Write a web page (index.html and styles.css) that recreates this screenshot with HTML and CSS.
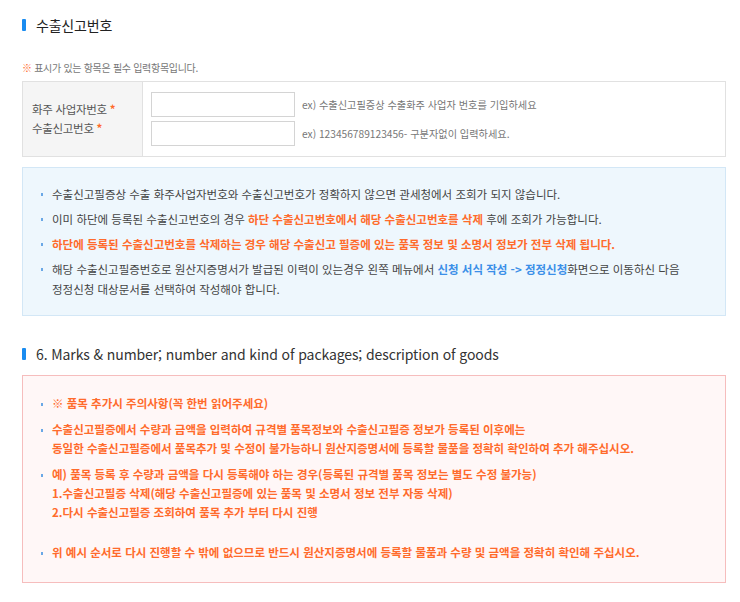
FILE: index.html
```html
<!DOCTYPE html>
<html lang="ko">
<head>
<meta charset="utf-8">
<title>수출신고번호</title>
<link rel="stylesheet" href="styles.css">
</head>
<body>
<div class="page">
  <h2 class="sec-title"><span class="bar"></span>수출신고번호</h2>
  <p class="req-note"><span class="mark">※</span> 표시가 있는 항목은 필수 입력항목입니다.</p>

  <div class="form-table">
    <div class="form-label">
      <div>화주 사업자번호 <span class="star">*</span></div>
      <div>수출신고번호 <span class="star">*</span></div>
    </div>
    <div class="form-fields">
      <div class="field-row">
        <input type="text" class="txt">
        <span class="hint">ex) 수출신고필증상 수출화주 사업자 번호를 기입하세요</span>
      </div>
      <div class="field-row">
        <input type="text" class="txt">
        <span class="hint">ex) 123456789123456- 구분자없이 입력하세요.</span>
      </div>
    </div>
  </div>

  <ul class="info-box">
    <li>수출신고필증상 수출 화주사업자번호와 수출신고번호가 정확하지 않으면 관세청에서 조회가 되지 않습니다.</li>
    <li>이미 하단에 등록된 수출신고번호의 경우 <strong class="warn">하단 수출신고번호에서 해당 수출신고번호를 삭제</strong> 후에 조회가 가능합니다.</li>
    <li class="warn">하단에 등록된 수출신고번호를 삭제하는 경우 해당 수출신고 필증에 있는 품목 정보 및 소명서 정보가 전부 삭제 됩니다.</li>
    <li>해당 수출신고필증번호로 원산지증명서가 발급된 이력이 있는경우 왼쪽 메뉴에서 <strong class="link">신청 서식 작성 -&gt; 정정신청</strong>화면으로 이동하신 다음<br>정정신청 대상문서를 선택하여 작성해야 합니다.</li>
  </ul>

  <h2 class="sec-title sec-title2"><span class="bar"></span>6. Marks &amp; number; number and kind of packages; description of goods</h2>

  <ul class="caution-box">
    <li>※ 품목 추가시 주의사항(꼭 한번 읽어주세요)</li>
    <li>수출신고필증에서 수량과 금액을 입력하여 규격별 품목정보와 수출신고필증 정보가 등록된 이후에는<br>동일한 수출신고필증에서 품목추가 및 수정이 불가능하니 원산지증명서에 등록할 물품을 정확히 확인하여 추가 해주십시오.</li>
    <li>예) 품목 등록 후 수량과 금액을 다시 등록해야 하는 경우(등록된 규격별 품목 정보는 별도 수정 불가능)<br>1.수출신고필증 삭제(해당 수출신고필증에 있는 품목 및 소명서 정보 전부 자동 삭제)<br>2.다시 수출신고필증 조회하여 품목 추가 부터 다시 진행</li>
    <li class="spaced">위 예시 순서로 다시 진행할 수 밖에 없으므로 반드시 원산지증명서에 등록할 물품과 수량 및 금액을 정확히 확인해 주십시오.</li>
  </ul>
</div>
</body>
</html>
```
FILE: styles.css
```css
* { box-sizing: border-box; }
html, body { margin: 0; padding: 0; background: #fff; }
body {
  font-family: "Noto Sans CJK KR", "Noto Sans", sans-serif;
  color: #444;
}
.page {
  padding: 15px 14px 0 22px;
}
.sec-title {
  margin: 0;
  display: flex;
  align-items: center;
  font-size: 14px;
  line-height: 20px;
  font-weight: normal;
  color: #222;
  letter-spacing: -0.2px;
}
.sec-title .bar {
  width: 4px;
  height: 12px;
  border-radius: 1px;
  background: #1a8cf0;
  margin-right: 10px;
  flex: none;
}
.sec-title2 {
  margin-top: 28px;
  letter-spacing: -0.1px;
  color: #333;
}
.req-note {
  margin: 26px 0 0 0;
  font-size: 10px;
  line-height: 14px;
  color: #777;
  letter-spacing: -0.3px;
}
.req-note .mark { color: #ff6b2c; }

.form-table {
  margin-top: 6px;
  display: flex;
  border: 1px solid #e1e1e1;
}
.form-label {
  width: 120px;
  flex: none;
  background: #f5f5f5;
  border-right: 1px solid #e1e1e1;
  display: flex;
  flex-direction: column;
  justify-content: center;
  padding-left: 9px;
  font-size: 11.5px;
  line-height: 19px;
  color: #555;
  letter-spacing: -0.3px;
}
.star { color: #ff6b2c; font-weight: bold; }
.form-fields {
  flex: 1;
  padding: 10px 8px;
  display: flex;
  flex-direction: column;
  gap: 4px;
}
.field-row {
  display: flex;
  align-items: center;
}
.txt {
  width: 144px;
  height: 25px;
  margin: 0;
  border: 1px solid #d4d4d4;
  background: #fff;
  padding: 0 4px;
}
.hint {
  margin-left: 7px;
  font-size: 10.2px;
  color: #777;
  letter-spacing: 0;
}

ul { list-style: none; margin: 0; }
.info-box li, .caution-box li {
  position: relative;
}
.info-box li::before, .caution-box li::before {
  content: "";
  position: absolute;
  left: -11px;
  top: 9px;
  width: 2px;
  height: 3px;
  background: #6aa8e6;
}
.info-box {
  margin-top: 10px;
  border: 1px solid #d3e7f6;
  background: #eef7fd;
  padding: 16px 20px 16px 29px;
  font-size: 11.5px;
  line-height: 20px;
  letter-spacing: 0;
}
.info-box li + li { margin-top: 5px; }
.warn { color: #ff6b2c; font-weight: bold; }
.link { color: #3b8fe8; font-weight: bold; }

.caution-box {
  margin-top: 11px;
  border: 1px solid #f6bdbd;
  background: #fff7f7;
  padding: 18px 20px 20px 29px;
  font-size: 11.5px;
  line-height: 19px;
  letter-spacing: 0;
  color: #ff6b2c;
  font-weight: bold;
}
.caution-box li + li { margin-top: 7px; }
.caution-box li.spaced { margin-top: 21px; }
```
